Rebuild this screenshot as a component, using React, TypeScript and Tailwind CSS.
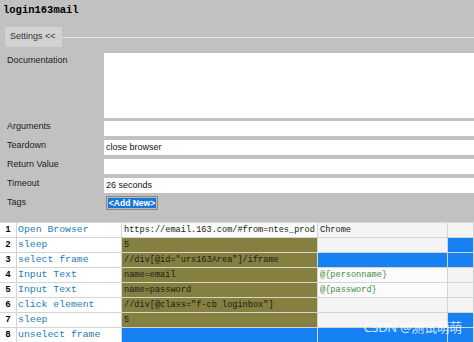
import React from 'react';

type Cell = { text?: string; bg: string; color?: string };

interface StepRow {
  n: number;
  keyword: string;
  cells: Cell[];
}

const OLIVE = 'bg-[#868040]';
const BLUE = 'bg-[#1581f2]';
const LIGHT = 'bg-[#f4f4f4]';
const WHITE = 'bg-[#fbfbfb]';

const rows: StepRow[] = [
  {
    n: 1,
    keyword: 'Open Browser',
    cells: [
      { text: 'https://email.163.com/#from=ntes_prod', bg: WHITE },
      { text: 'Chrome', bg: LIGHT },
      { bg: LIGHT },
    ],
  },
  { n: 2, keyword: 'sleep', cells: [{ text: '5', bg: OLIVE }, { bg: LIGHT }, { bg: BLUE }] },
  {
    n: 3,
    keyword: 'select frame',
    cells: [{ text: '//div[@id="urs163Area"]/iframe', bg: OLIVE }, { bg: BLUE }, { bg: BLUE }],
  },
  {
    n: 4,
    keyword: 'Input Text',
    cells: [
      { text: 'name=email', bg: OLIVE },
      { text: '@{personname}', bg: WHITE, color: 'text-[#3f8f3f]' },
      { bg: LIGHT },
    ],
  },
  {
    n: 5,
    keyword: 'Input Text',
    cells: [
      { text: 'name=password', bg: OLIVE },
      { text: '@{password}', bg: WHITE, color: 'text-[#3f8f3f]' },
      { bg: LIGHT },
    ],
  },
  {
    n: 6,
    keyword: 'click element',
    cells: [{ text: '//div[@class="f-cb loginbox"]', bg: OLIVE }, { bg: LIGHT }, { bg: LIGHT }],
  },
  { n: 7, keyword: 'sleep', cells: [{ text: '5', bg: OLIVE }, { bg: LIGHT }, { bg: BLUE }] },
  { n: 8, keyword: 'unselect frame', cells: [{ bg: BLUE }, { bg: BLUE }, { bg: BLUE }] },
];

const fields = [
  { label: 'Arguments', value: '' },
  { label: 'Teardown', value: 'close browser' },
  { label: 'Return Value', value: '' },
  { label: 'Timeout', value: '26 seconds' },
];

export default function App() {
  return (
    <div className="relative w-[474px] h-[342px] overflow-hidden bg-[#c1c1c1] font-['Liberation_Sans',sans-serif] text-[9px] text-[#222]">
      {/* Title */}
      <div className="h-[22px] pl-[3px] pt-[3px] font-['Liberation_Mono',monospace] font-bold text-[10.5px] text-black">
        login163mail
      </div>

      {/* Settings toggle */}
      <div className="flex items-center h-[20px] mt-[5px] pl-[5px]">
        <div className="w-[57px] h-[20px] flex items-center pl-[5px] bg-[#d2d2d2] text-[9px] text-[#333]">
          Settings &lt;&lt;
        </div>
        <div className="flex-1 h-px bg-[#e6e6e6]" />
      </div>

      {/* Settings fields */}
      <div className="flex mt-[6px]">
        <div className="w-[104px] pl-[7px] pt-[1px] text-[9px]">Documentation</div>
        <div className="flex-1 h-[65px] bg-white" />
      </div>
      <div className="flex flex-col gap-[4px] mt-[3px]">
        {fields.map((f) => (
          <div key={f.label} className="flex items-center h-[15px]">
            <div className="w-[104px] pl-[7px] -mt-[3px]">{f.label}</div>
            <div className="flex-1 h-[15px] bg-white pl-[2px] flex items-center text-[9px] text-[#111]">
              {f.value}
            </div>
          </div>
        ))}
      </div>
      <div className="flex items-center h-[14px] mt-[3px]">
        <div className="w-[104px] pl-[7px]">Tags</div>
        <div className="ml-[2px] w-[52px] h-[14px] border border-[#8a8a8a] bg-[#b9b9b9] p-px">
          <div className="w-full h-full bg-[#1877d8] text-white font-bold text-[8.5px] flex items-center justify-center">
            &lt;Add New&gt;
          </div>
        </div>
      </div>

      {/* Test case table */}
      <div className="mt-[12px] grid grid-cols-[17px_105px_196px_130px_1fr] border-t border-[#d8d8d8]">
        {rows.map((r) => (
          <React.Fragment key={r.n}>
            <div className="h-[15px] bg-white border-r border-b border-[#d4d4d4] flex items-center justify-center font-bold text-[9px] text-black">
              {r.n}
            </div>
            <div className="h-[15px] bg-white border-r border-b border-[#d4d4d4] pl-px flex items-center font-['Liberation_Mono',monospace] text-[9.8px] text-[#1c7db5] whitespace-nowrap overflow-hidden">
              {r.keyword}
            </div>
            {r.cells.map((c, i) => (
              <div
                key={i}
                className={`h-[15px] ${c.bg} border-r border-b border-[#d4d4d4] pl-[2px] flex items-center font-['Liberation_Mono',monospace] text-[8.6px] whitespace-nowrap overflow-hidden ${c.color ?? 'text-[#1a1a1a]'}`}
              >
                {c.text}
              </div>
            ))}
          </React.Fragment>
        ))}
      </div>

      {/* Watermark */}
      <div className="absolute right-[12px] bottom-[5px] text-[13px] text-white/80 font-['Noto_Sans','Noto_Sans_CJK_SC',sans-serif] tracking-tight">
        CSDN @测试萌萌
      </div>
    </div>
  );
}
